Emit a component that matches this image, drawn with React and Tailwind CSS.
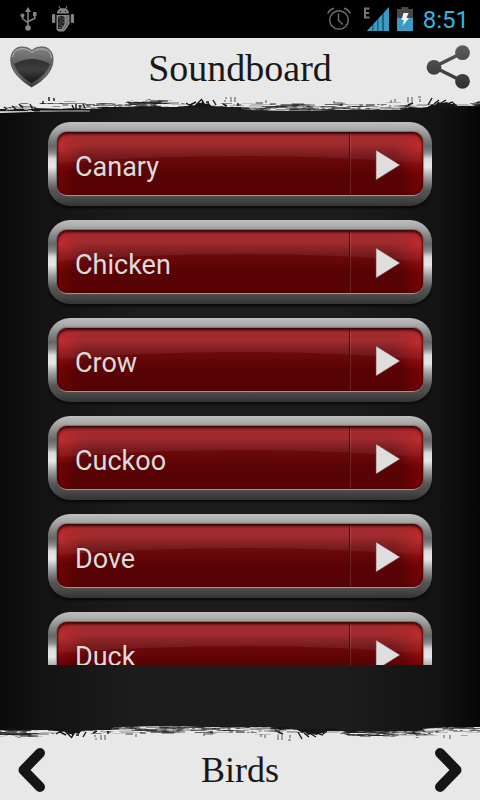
import { useState } from 'react'

const SOUNDS = ['Canary', 'Chicken', 'Crow', 'Cuckoo', 'Dove', 'Duck']

// One brush strip, 610 units long. Each bar shows a 480 unit window of it.
const BRUSH_EDGE =
  'M0 0H610V18H580L560 17L548 14H480L455 14L430 14L425 16L410 15L404 18H330L300 19L244 18L240 15H216L210 14L200 13L186 14L180 15H104L94 18L60 19L30 20L0 21Z'

// from, to, top, bottom, amount of dark streaks, amount of light streaks
const BRUSH_BANDS = [
  [0, 100, 15, 18, 40, 6],
  [10, 105, 9, 14, 16, 0],
  [90, 188, 9, 15, 56, 4],
  [125, 168, 7, 11, 34, 0],
  [186, 240, 11, 15, 24, 0],
  [238, 330, 9, 17, 64, 14],
  [320, 410, 10, 17, 64, 14],
  [400, 480, 11, 15, 34, 3],
  [470, 560, 7, 13, 90, 8],
  [545, 610, 9, 17, 38, 14],
]

function makeStreaks() {
  let seed = 41
  const rand = () => {
    seed = (seed * 16807) % 2147483647
    return seed / 2147483647
  }
  const list = []
  BRUSH_BANDS.forEach(([from, to, top, bottom, dark, light]) => {
    for (let i = 0; i < dark + light; i++) {
      const w = 2 + rand() * rand() * 34
      // dark strokes gather near the painted edge
      const depth = i < dark ? Math.sqrt(rand()) : rand()
      list.push({
        x: from + rand() * (to - from - w / 2),
        y: top + Math.floor(depth * (bottom - top + 1)),
        w,
        h: rand() > 0.8 ? 2 : 1,
        fill: i < dark ? '#161616' : '#e4e4e4',
        opacity: 0.15 + rand() * 0.5,
      })
    }
  })
  return list
}

const STREAKS = makeStreaks()

function BrushEdge({ viewBox, className }) {
  return (
    <svg viewBox={viewBox} preserveAspectRatio="none" className={`block h-6 w-full ${className}`} aria-hidden="true">
      <path d={BRUSH_EDGE} fill="#e8e8e8" />
      {STREAKS.map((s, i) => (
        <rect key={i} x={s.x} y={s.y} width={s.w} height={s.h} fill={s.fill} opacity={s.opacity} />
      ))}
      <path
        d="M4 15l6 4M12 14l6 5M19 12l4 4M30 12l3 6M43 9v3M49 5v4M54 6v3M72 13l2 4M76 12v5M80 13v4M83 12l2 4M186 11l5 3M190 13l6-3M197 12l5-5M202 8l2 4M206 10h3M213 8l3 5M223 12l4 2M238 11v3M408 13l5-2M428 13l4-7M434 12l5-4M441 11l5-3M447 12l6-2M453 11l4 3"
        stroke="#161616"
        strokeWidth="1.4"
      />
      <path
        d="M187 15l4-2 3 1 3-3 4 0 2-2 2 3 4-1 2 3 4 1zM428 15l4-3 3 1 3-3 4 1 5-1 2 2 5 0 2 2 8 1zM0 17h34l0-1 30 1h26l10 0v1l-30 1-70 1z"
        fill="#161616"
      />
      <path d="M0 19.500h34M40 19h50M6 18l8-1M24 17l8 2" stroke="#dedede" strokeWidth="1" opacity=".8" />
      <path
        d="M225 6h2M225 8v2M231 5v5M235 5v5M408 5v5M412 5v5M418 5h3M420 7v3M266 8v3M334 9v2M391 8v3M395 7v3M574 7v3M580 6v4"
        stroke="#555"
        strokeWidth="1"
      />
    </svg>
  )
}

function UsbIcon() {
  return (
    <svg width="17" height="24" viewBox="0 0 17 24" fill="#858585" aria-hidden="true">
      <path d="M8 0l3 5H5z" />
      <circle cx="8" cy="21" r="2.800" />
      <circle cx="2.500" cy="8.500" r="2" />
      <path d="M13 5h3.500v4H13z" />
      <path d="M8 4v17M2.500 8v3.500L8 16M14.700 8v3.500L8 14.500" stroke="#858585" strokeWidth="1.500" fill="none" />
    </svg>
  )
}

function AndroidIcon() {
  return (
    <svg width="22" height="26" viewBox="0 0 22 26" aria-hidden="true">
      <g fill="#858585">
        <path d="M5 7.500C5 4 7.500 2.200 11 2.200S17 4 17 7.500z" />
        <rect x="0" y="8" width="3.200" height="9" rx="1" />
        <rect x="18.800" y="8" width="3.200" height="9" rx="1" />
        <path d="M4.500 9H17.500V17.500L15 22L12 25.500H6.500L4.500 23.500z" />
      </g>
      <path d="M7 0l1.500 3M15 0l-1.500 3" stroke="#858585" />
      <path d="M8 5.500h1M13 5.500h1" stroke="#000" />
      <path d="M6 11q4-2 6.500 0v7l-3 5H6z" fill="#222" />
      <path d="M7.500 12h1M10.500 13h1M8.500 15h1M10.500 16.500h1M7.500 18h1M9.500 20h1M7.500 21.500h1" stroke="#999" />
      <path d="M15 10v8l-4 6" stroke="#555" strokeWidth=".8" fill="none" />
    </svg>
  )
}

function AlarmIcon() {
  return (
    <svg width="24" height="24" viewBox="0 0 24 24" fill="none" stroke="#6c6c6c" aria-hidden="true">
      <circle cx="12" cy="13" r="9.300" strokeWidth="1.500" />
      <path d="M11.500 6.500V13.500L16 17.500" strokeWidth="1.500" />
      <path d="M.8 6.500C2 3.500 4 2 7 1.200M23.200 6.500C22 3.500 20 2 17 1.200" strokeWidth="1.600" />
    </svg>
  )
}

function SignalIcon() {
  return (
    <svg width="26" height="24" viewBox="0 0 26 24" aria-hidden="true">
      <path d="M4 24L26 0V24z" fill="#1c6580" />
      <path d="M4 24l5-5.400V24zM10.500 17l3.500-3.900V24h-3.500zM15.500 11.500l3.500-3.800V24h-3.500zM21 5.500L26 0V24h-5z" fill="#3a9cc2" />
      <path d="M6.500 1.500H2V10.500H6.500M2 6H6" fill="none" stroke="#777" strokeWidth="2" />
    </svg>
  )
}

function BatteryIcon() {
  return (
    <svg width="16" height="24" viewBox="0 0 16 24" aria-hidden="true">
      <path d="M4.500 0h7v2H16v9H0V2h4.500z" fill="#484848" />
      <path d="M0 11h16v13H0z" fill="#3a9cc2" />
      <path d="M6.500 6h5L9.500 11H12L5.500 19 7 13H4.500z" fill="#f2f2f2" />
    </svg>
  )
}

function StatusBar() {
  return (
    <div className="flex h-[38px] shrink-0 items-center justify-between bg-black pr-[11px] pl-5">
      <div className="flex items-center gap-[15px]">
        <UsbIcon />
        <AndroidIcon />
      </div>
      <div className="flex items-center gap-2">
        <AlarmIcon />
        <div className="pl-1">
          <SignalIcon />
        </div>
        <BatteryIcon />
        <span className="pl-0.5 pt-0.5 text-[24px] leading-6 text-[#33b5e5]">8:51</span>
      </div>
    </div>
  )
}

function HeartIcon() {
  return (
    <svg width="44" height="42" viewBox="0 0 44 42" aria-hidden="true">
      <defs>
        <linearGradient id="heart-body" x1="0" y1="0" x2="0" y2="1">
          <stop offset="0" stopColor="#858585" />
          <stop offset=".4" stopColor="#606060" />
          <stop offset=".7" stopColor="#6c6c6c" />
          <stop offset="1" stopColor="#303030" />
        </linearGradient>
        <linearGradient id="heart-shade" x1="0" y1="0" x2="0" y2="1">
          <stop offset="0" stopColor="#303030" />
          <stop offset=".45" stopColor="#3d3d3d" />
          <stop offset="1" stopColor="#181818" />
        </linearGradient>
      </defs>
      <path
        d="M22 4.500C25 1.500 29 .8 33 1C39 1.500 43 6 43 13.500C43 25 34 34.500 21.500 41C10 34 .8 25 .8 14C.8 6.500 5 1.200 11.500 1C15.500 1 19 2 22 4.500z"
        fill="url(#heart-body)"
        stroke="#585858"
        strokeWidth="1"
      />
      <path d="M4 18Q22 8 40 18C38 25 33 31 21.500 37C11 31 6 25 4 18z" fill="url(#heart-shade)" />
      <path d="M2.500 11C3.500 5.500 7 2.800 12 2.800C16 2.800 19.500 4 22 6.500C25 3.500 29 2.600 33 3C38 3.800 41 6.500 41.500 12" fill="none" stroke="#b5b5b5" strokeWidth="1" />
    </svg>
  )
}

function ShareIcon() {
  return (
    <svg width="44" height="44" viewBox="0 0 44 44" aria-hidden="true">
      <defs>
        <linearGradient id="share-fill" gradientUnits="userSpaceOnUse" x1="0" y1="0" x2="0" y2="44">
          <stop offset="0" stopColor="#5c5c5c" />
          <stop offset="1" stopColor="#303030" />
        </linearGradient>
      </defs>
      <path d="M36 8L8 22L36 36" fill="none" stroke="url(#share-fill)" strokeWidth="3.600" />
      <g fill="url(#share-fill)">
        <circle cx="36.500" cy="7.700" r="7.400" />
        <circle cx="8" cy="22.300" r="7.400" />
        <circle cx="36.500" cy="36.300" r="7.400" />
      </g>
    </svg>
  )
}

function Chevron({ className }) {
  return (
    <svg width="28" height="46" viewBox="0 0 28 46" className={className} aria-hidden="true">
      <path d="M23 6L6.500 23L23 40" fill="none" stroke="#161616" strokeWidth="10" strokeLinecap="round" strokeLinejoin="round" />
    </svg>
  )
}

function Header() {
  return (
    <header className="shrink-0">
      <div className="flex h-[54px] items-center justify-between bg-[#e8e8e8] px-[10px] pt-1">
        <button type="button" aria-label="Favourites">
          <HeartIcon />
        </button>
        <h1 className="pt-0.5 font-['Liberation_Serif',serif] text-[38px] leading-[46px] text-[#181818]">Soundboard</h1>
        <button type="button" aria-label="Share">
          <ShareIcon />
        </button>
      </div>
      <BrushEdge viewBox="0 0 480 24" className="" />
    </header>
  )
}

function SoundButton({ name, playing, onPlay }) {
  return (
    <button
      type="button"
      onClick={onPlay}
      aria-pressed={playing}
      className="block w-full rounded-[22px] bg-[linear-gradient(180deg,#c0c0c0_0px,#a2a2a2_9px,#666_24px,#8a8a8a_31px,#dcdcdc_37px,#e8e8e8_45px,#999_56px,#555_68px,#4a4a4a_75px,#333_84px)] px-[9px] py-[10px] text-left shadow-[0_2px_3px_#080808]"
    >
      <span className="relative flex h-16 items-stretch overflow-hidden rounded-[10px] border-b border-[#999] bg-[linear-gradient(180deg,#5a0608_0px,#6e0a0b_24px,#5a0305_40px,#560305_64px)] shadow-[0_0_1px_1px_#5559]">
        <svg viewBox="0 0 366 63" preserveAspectRatio="none" className="absolute inset-0 h-full w-full" aria-hidden="true">
          <defs>
            <linearGradient id="gloss" gradientUnits="userSpaceOnUse" x1="0" y1="0" x2="0" y2="31">
              <stop offset="0" stopColor="#a52a2d" />
              <stop offset=".4" stopColor="#a02b2e" />
              <stop offset=".75" stopColor="#781d1f" />
              <stop offset="1" stopColor="#701416" />
            </linearGradient>
            <radialGradient id="glow-left" gradientUnits="userSpaceOnUse" cx="4" cy="14" r="26">
              <stop offset="0" stopColor="#d0383c" stopOpacity=".6" />
              <stop offset="1" stopColor="#b02024" stopOpacity="0" />
            </radialGradient>
            <radialGradient id="glow-right" gradientUnits="userSpaceOnUse" cx="362" cy="14" r="30">
              <stop offset="0" stopColor="#d0383c" stopOpacity=".6" />
              <stop offset="1" stopColor="#b02024" stopOpacity="0" />
            </radialGradient>
            <linearGradient id="sides" x1="0" y1="0" x2="1" y2="0">
              <stop offset="0" stopColor="#a00" stopOpacity=".3" />
              <stop offset=".05" stopColor="#a00" stopOpacity="0" />
              <stop offset=".94" stopColor="#a00" stopOpacity="0" />
              <stop offset="1" stopColor="#a00" stopOpacity=".4" />
            </linearGradient>
          </defs>
          <path d="M0 0H366V31Q183 17 0 31z" fill="url(#gloss)" />
          <path d="M0 0H366V63H0z" fill="url(#sides)" />
          <path d="M0 0H366V63H0z" fill="url(#glow-left)" />
          <path d="M0 0H366V63H0z" fill="url(#glow-right)" />
        </svg>
        <span className="relative flex flex-1 items-center pt-1.5 pl-[18px] text-[27px] leading-8 text-[#dcdcdc]">{name}</span>
        <span className="relative flex w-[74px] items-center border-l border-[#4a0a0c] pt-0.5 shadow-[inset_1px_0_#ffffff22]">
          <svg width="26" height="32" viewBox="0 0 26 32" className="ml-[25px]" aria-hidden="true">
            <path d="M1 1L25 16L1 31z" fill="#dedede" stroke="#7a3a3a" strokeWidth=".6" />
          </svg>
        </span>
        <span className="absolute inset-0 rounded-[10px] shadow-[inset_0_2px_3px_#300404,inset_0_0_2px_#400]" />
      </span>
    </button>
  )
}

function Footer() {
  return (
    <footer className="shrink-0">
      <BrushEdge viewBox="130 0 480 24" className="-scale-y-100" />
      <div className="flex h-[55px] items-center justify-between bg-[#e8e8e8] px-[17px] pb-1.5">
        <button type="button" aria-label="Previous category">
          <Chevron className="" />
        </button>
        <h2 className="font-['Liberation_Serif',serif] text-[36px] leading-[46px] text-[#181818]">Birds</h2>
        <button type="button" aria-label="Next category">
          <Chevron className="-scale-x-100" />
        </button>
      </div>
    </footer>
  )
}

export default function App() {
  const [playing, setPlaying] = useState(null)

  return (
    <div className="flex h-screen flex-col overflow-hidden bg-[linear-gradient(90deg,#0a0a0a_0%,#131313_9%,#1c1c1c_28%,#1c1c1c_72%,#131313_91%,#060606_100%)] font-[Roboto,sans-serif]">
      <StatusBar />
      <Header />
      <main className="flex min-h-0 flex-1 flex-col px-[10%] pt-1.5 pb-14">
        <ul className="flex min-h-0 flex-1 flex-col gap-[14px] overflow-y-auto [scrollbar-width:none]">
          {SOUNDS.map((name) => (
            <li key={name} className="shrink-0">
              <SoundButton name={name} playing={playing === name} onPlay={() => setPlaying(name)} />
            </li>
          ))}
        </ul>
      </main>
      <Footer />
    </div>
  )
}
